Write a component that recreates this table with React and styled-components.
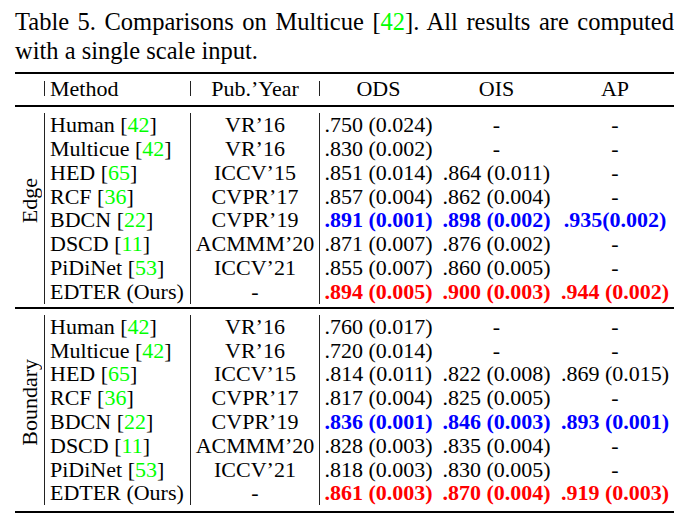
import React from 'react';
import styled, { createGlobalStyle } from 'styled-components';

const Global = createGlobalStyle`
  html, body { margin: 0; padding: 0; background: #fff; }
  body { font-family: "Liberation Serif", "Times New Roman", serif; color: #000; }
`;

const Page = styled.div`
  width: 659px;
  padding: 8px 15px 0 15px;
`;

const Caption = styled.div`
  font-size: 24.5px;
  line-height: 28.6px;
`;

const CaptionLine = styled.div`
  white-space: nowrap;
  text-align: ${(p) => (p.$justify ? 'justify' : 'left')};
  text-align-last: ${(p) => (p.$justify ? 'justify' : 'left')};
`;

const Green = styled.span`
  color: #00ff00;
`;

const Rule = styled.div`
  height: 2px;
  background: #000;
  margin-top: ${(p) => p.$mt || 0}px;
`;

const Grid = styled.div`
  display: grid;
  grid-template-columns: 29px 146px 129px 118px 119px 118px;
  grid-auto-rows: ${(p) => p.$row}px;
  padding: ${(p) => p.$pt}px 0 ${(p) => p.$pb}px;
  font-size: 22px;
  line-height: ${(p) => p.$row}px;
`;

const Cell = styled.div`
  white-space: nowrap;
  text-align: ${(p) => p.$align || 'center'};
  padding-left: ${(p) => p.$pl || 0}px;
  border-left: ${(p) => (p.$line ? '1px solid #222' : 'none')};
  color: ${(p) => (p.$tone === 'blue' ? '#0000ff' : p.$tone === 'red' ? '#ff0000' : '#000')};
  font-weight: ${(p) => (p.$tone ? 700 : 400)};
`;

const GroupLabel = styled.div`
  grid-row: 1 / span 8;
  grid-column: 1;
  display: flex;
  align-items: center;
  justify-content: center;
  padding-bottom: 16px;
`;

const Vertical = styled.span`
  writing-mode: vertical-rl;
  transform: rotate(180deg);
  font-size: 22px;
  line-height: 1;
`;

const Cite = ({ n }) => (
  <span>
    [<Green>{n}</Green>]
  </span>
);

const groups = [
  {
    label: 'Edge',
    pt: 6,
    pb: 3.6,
    rows: [
      ['Human', 42, 'VR’16', '.750 (0.024)', '-', '-', null],
      ['Multicue', 42, 'VR’16', '.830 (0.002)', '-', '-', null],
      ['HED', 65, 'ICCV’15', '.851 (0.014)', '.864 (0.011)', '-', null],
      ['RCF', 36, 'CVPR’17', '.857 (0.004)', '.862 (0.004)', '-', null],
      ['BDCN', 22, 'CVPR’19', '.891 (0.001)', '.898 (0.002)', '.935(0.002)', 'blue'],
      ['DSCD', 11, 'ACMMM’20', '.871 (0.007)', '.876 (0.002)', '-', null],
      ['PiDiNet', 53, 'ICCV’21', '.855 (0.007)', '.860 (0.005)', '-', null],
      ['EDTER (Ours)', null, '-', '.894 (0.005)', '.900 (0.003)', '.944 (0.002)', 'red'],
    ],
  },
  {
    label: 'Boundary',
    pt: 5.7,
    pb: 5.9,
    rows: [
      ['Human', 42, 'VR’16', '.760 (0.017)', '-', '-', null],
      ['Multicue', 42, 'VR’16', '.720 (0.014)', '-', '-', null],
      ['HED', 65, 'ICCV’15', '.814 (0.011)', '.822 (0.008)', '.869 (0.015)', null],
      ['RCF', 36, 'CVPR’17', '.817 (0.004)', '.825 (0.005)', '-', null],
      ['BDCN', 22, 'CVPR’19', '.836 (0.001)', '.846 (0.003)', '.893 (0.001)', 'blue'],
      ['DSCD', 11, 'ACMMM’20', '.828 (0.003)', '.835 (0.004)', '-', null],
      ['PiDiNet', 53, 'ICCV’21', '.818 (0.003)', '.830 (0.005)', '-', null],
      ['EDTER (Ours)', null, '-', '.861 (0.003)', '.870 (0.004)', '.919 (0.003)', 'red'],
    ],
  },
];

export default function App() {
  return (
    <>
      <Global />
      <Page>
        <Caption>
          <CaptionLine $justify>
            Table 5. Comparisons on Multicue <Cite n={42} />. All results are computed
          </CaptionLine>
          <CaptionLine>with a single scale input.</CaptionLine>
        </Caption>
        <Rule $mt={7} />
        <Grid $row={15} $pt={7} $pb={9}>
          <Cell />
          <Cell $line $align="left" $pl={5}>Method</Cell>
          <Cell $line>Pub.’Year</Cell>
          <Cell $line>ODS</Cell>
          <Cell>OIS</Cell>
          <Cell>AP</Cell>
        </Grid>
        <Rule />
        {groups.map((g) => (
          <React.Fragment key={g.label}>
            <Grid $row={23.8} $pt={g.pt} $pb={g.pb}>
              <GroupLabel>
                <Vertical>{g.label}</Vertical>
              </GroupLabel>
              {g.rows.map(([name, ref, pub, ods, ois, ap, tone], i) => (
                <React.Fragment key={i}>
                  <Cell $line $align="left" $pl={5} style={{ gridColumn: 2 }}>
                    {name}
                    {ref !== null && (
                      <>
                        {' '}
                        <Cite n={ref} />
                      </>
                    )}
                  </Cell>
                  <Cell $line>{pub}</Cell>
                  <Cell $line $tone={tone}>{ods}</Cell>
                  <Cell $tone={ois === '-' ? null : tone}>{ois}</Cell>
                  <Cell $tone={ap === '-' ? null : tone}>{ap}</Cell>
                </React.Fragment>
              ))}
            </Grid>
            <Rule />
          </React.Fragment>
        ))}
      </Page>
    </>
  );
}
